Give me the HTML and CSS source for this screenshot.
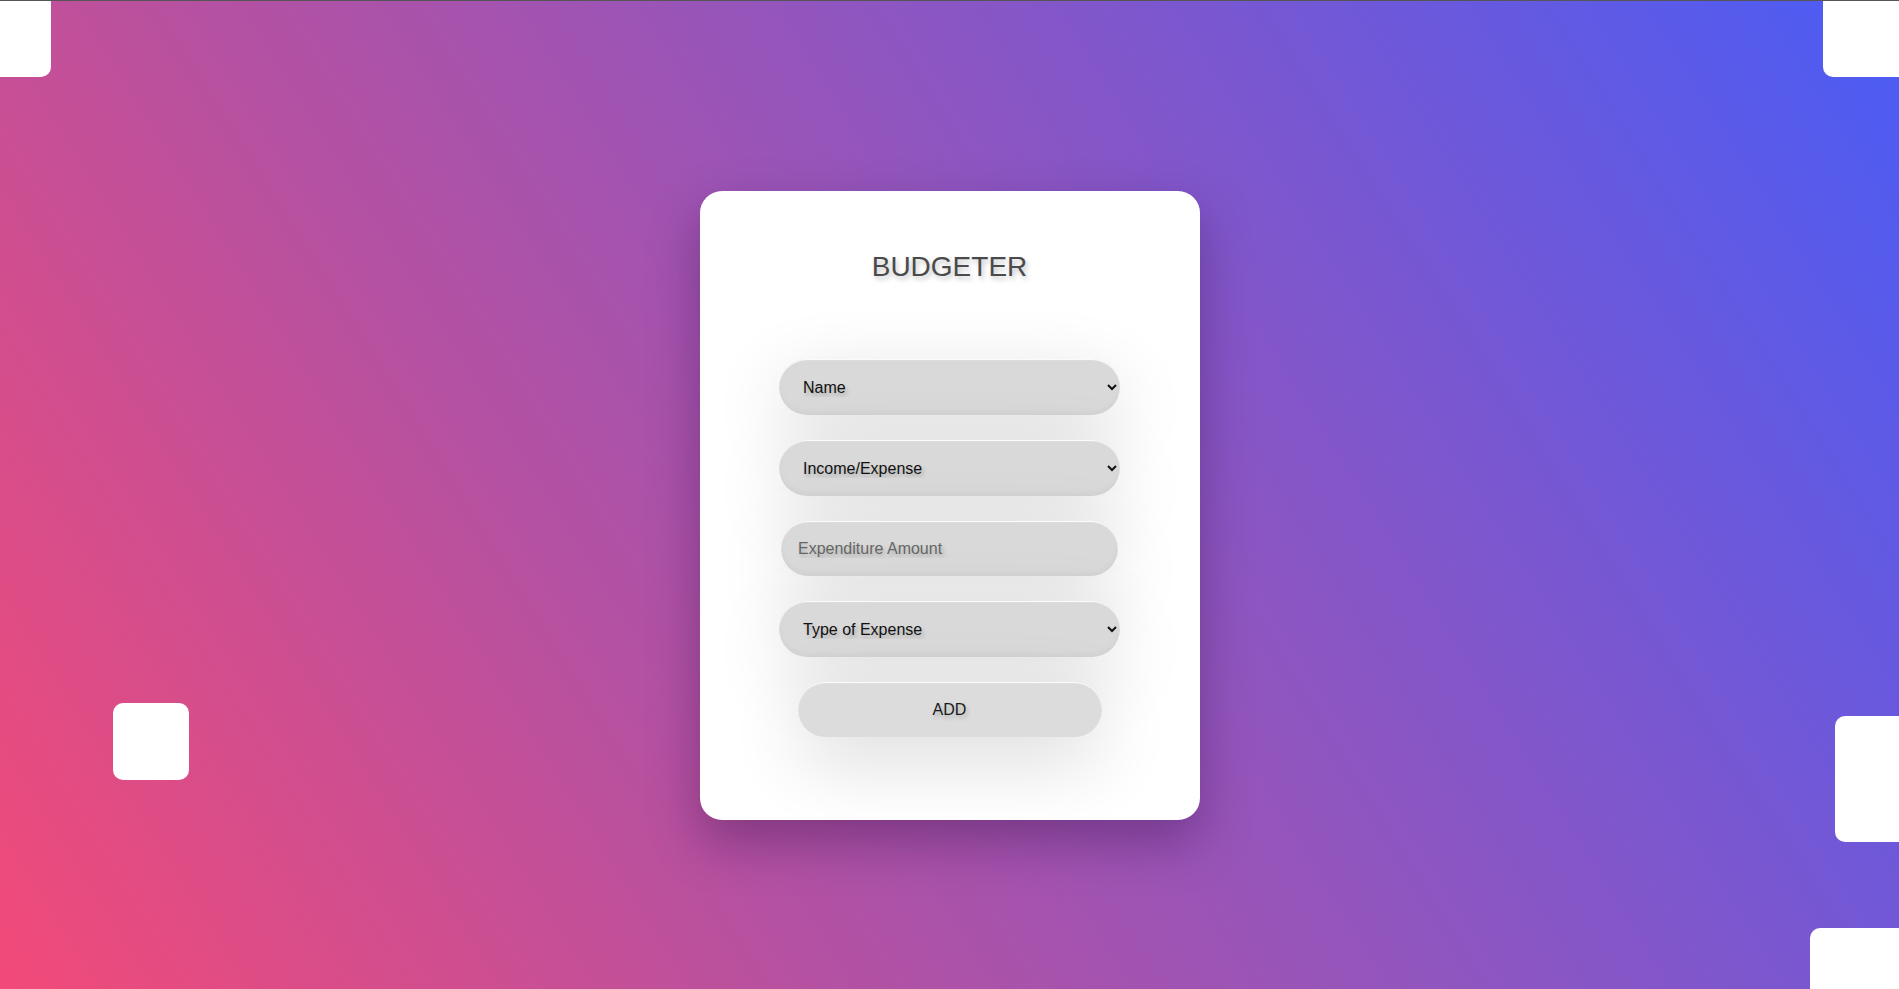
FILE: index.html
```html
<!DOCTYPE html>
<html lang="en">
<head>
<meta charset="utf-8">
<title>Budgeter</title>
<link rel="stylesheet" href="styles.css">
</head>
<body>
<div class="page">
  <div class="shape shape-tl"></div>
  <div class="shape shape-tr"></div>
  <div class="shape shape-bl"></div>
  <div class="shape shape-r"></div>
  <div class="shape shape-br"></div>
  <main class="card">
    <h1 class="title">BUDGETER</h1>
    <form class="form">
      <select class="field field-select">
        <option>Name</option>
      </select>
      <select class="field field-select">
        <option>Income/Expense</option>
      </select>
      <input class="field field-input" type="text" placeholder="Expenditure Amount">
      <select class="field field-select">
        <option>Type of Expense</option>
      </select>
      <button class="btn" type="button">ADD</button>
    </form>
  </main>
</div>
</body>
</html>
```
FILE: styles.css
```css
* { box-sizing: border-box; }
html, body { margin: 0; padding: 0; }
body {
  font-family: "Liberation Sans", Arial, sans-serif;
  overflow: hidden;
  background: #555;
}
.page {
  position: relative;
  margin-top: 1px;
  height: 988px;
  overflow: hidden;
  background: linear-gradient(58deg, #f24a78 0%, #b451a2 33%, #9455bc 55%, #7a57d0 72%, #4a5cf5 100%);
  display: flex;
  justify-content: center;
  align-items: center;
  padding-top: 21px;
}
.shape {
  position: absolute;
  background: #fff;
  border-radius: 10px;
}
.shape-tl { left: -25px; top: -20px; width: 76px; height: 96px; }
.shape-tr { left: 1823px; top: -20px; width: 100px; height: 96px; }
.shape-bl { left: 113px; top: 702px; width: 76px; height: 77px; }
.shape-r { left: 1835px; top: 715px; width: 100px; height: 126px; }
.shape-br { left: 1810px; top: 927px; width: 120px; height: 100px; }

.card {
  width: 500px;
  height: 629px;
  background: #fff;
  border-radius: 22px;
  box-shadow: 0 22px 50px rgba(40, 10, 60, 0.35);
  padding-top: 60px;
  display: flex;
  flex-direction: column;
  align-items: center;
}
.title {
  margin: 0;
  font-size: 28px;
  font-weight: normal;
  line-height: 32px;
  color: #4a4a4a;
  text-shadow: 2px 3px 5px rgba(0, 0, 0, 0.25);
}
.form {
  margin-top: 76px;
  display: flex;
  flex-direction: column;
  align-items: center;
}
.field {
  font-family: "Liberation Sans", Arial, sans-serif;
  font-size: 16px;
  height: 56px;
  border: none;
  border-radius: 28px;
  background: #d9d9d9;
  outline: none;
  box-shadow: inset 0 1px 1px #fff, inset 0 -3px 6px rgba(0, 0, 0, 0.03), 0 20px 75px rgba(0, 0, 0, 0.14);
  text-shadow: 2px 3px 4px rgba(0, 0, 0, 0.22);
  color: #111;
}
.field-select {
  width: 341px;
  padding: 0 8px 0 20px;
  margin-bottom: 25px;
}
.field-input {
  width: 337px;
  height: 55px;
  padding: 0 17px;
  margin-bottom: 25px;
}
.field-input::placeholder {
  color: #666;
  text-shadow: 2px 3px 4px rgba(0, 0, 0, 0.22);
}
.btn {
  width: 304px;
  height: 55px;
  border: none;
  border-radius: 28px;
  background: #dcdcdc;
  font-family: "Liberation Sans", Arial, sans-serif;
  font-size: 16px;
  color: #1a1a1a;
  text-shadow: 2px 3px 4px rgba(0, 0, 0, 0.22);
  box-shadow: inset 0 1px 1px #fff, 0 22px 75px rgba(0, 0, 0, 0.16);
}
```
